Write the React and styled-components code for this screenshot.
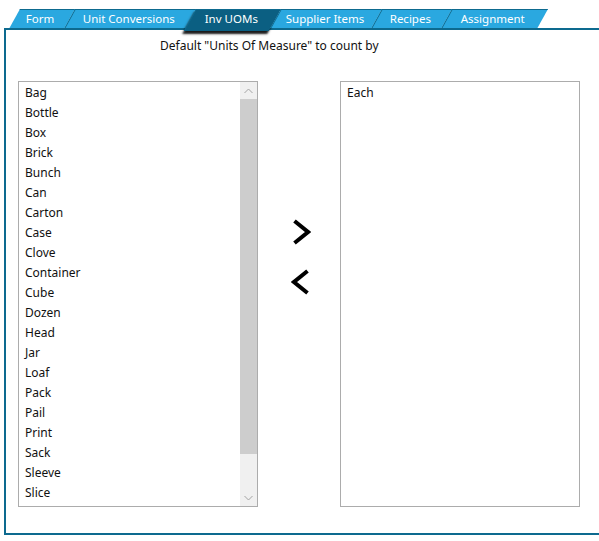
import React from 'react';
import styled, { createGlobalStyle } from 'styled-components';

const Global = createGlobalStyle`
  html, body { margin: 0; padding: 0; background: #fff; overflow: hidden; }
  body { font-family: "Noto Sans", "Open Sans", sans-serif; }
`;

const Page = styled.div`
  padding: 9px 0 0 4px;
  width: 620px;
`;

const TabStrip = styled.div`
  display: flex;
  padding-left: 11px;
  height: 19px;
  position: relative;
  z-index: 1;
`;

const Tab = styled.div`
  box-sizing: border-box;
  width: ${p => p.$w}px;
  height: ${p => (p.$active ? 22 : 19)}px;
  border-top: 1px solid #0d6a8f;
  border-left: ${p => (p.$first ? 'none' : '1px solid #0d6a8f')};
  background: ${p => (p.$active ? '#0b5f82' : '#2aa8e0')};
  box-shadow: ${p => (p.$active ? '0 3px 2px 0 rgba(0,0,0,0.9)' : 'none')};
  transform: skewX(-29deg);
  transform-origin: 0 9px;
  display: flex;
  align-items: flex-start;
  justify-content: center;
  flex-shrink: 0;
`;

const TabLabel = styled.span`
  transform: skewX(29deg);
  color: #fff;
  font-size: 11.5px;
  line-height: 17px;
  padding-right: 4px;
  white-space: nowrap;
`;

const Panel = styled.div`
  box-sizing: border-box;
  width: 600px;
  height: 507px;
  border-top: 2px solid #0d6a8f;
  border-left: 2px solid #0d6a8f;
  border-bottom: 2px solid #0d6a8f;
  padding: 8px 0 0 12px;
`;

const Caption = styled.div`
  margin-left: 142px;
  font-size: 12px;
  line-height: 16px;
  color: #111;
`;

const ListsRow = styled.div`
  display: grid;
  grid-template-columns: 240px 82px 240px;
  margin-top: 27px;
`;

const ListBox = styled.div`
  box-sizing: border-box;
  height: 426px;
  border: 1px solid #acacac;
  display: flex;
  background: #fff;
`;

const Items = styled.div`
  flex: 1;
  padding: 1px 0 0 6px;
  overflow: hidden;
`;

const Item = styled.div`
  font-size: 12px;
  line-height: 20px;
  color: #111;
  white-space: nowrap;
`;

const Scrollbar = styled.div`
  width: 17px;
  background: #f0f0f0;
  display: flex;
  flex-direction: column;
`;

const ScrollArrow = styled.div`
  height: 17px;
  display: flex;
  align-items: center;
  justify-content: center;
`;

const Track = styled.div`
  flex: 1;
`;

const Thumb = styled.div`
  background: #cdcdcd;
`;

const Mover = styled.div`
  display: flex;
  flex-direction: column;
  gap: 22px;
  padding: 137px 0 0 33px;
`;

const Chevron = ({ dir }) => (
  <svg width="20" height="28" viewBox="0 0 20 28">
    <path
      d={dir === 'right' ? 'M3.5 3 L17 14 L3.5 25' : 'M16.5 3 L3 14 L16.5 25'}
      fill="none"
      stroke="#000"
      strokeWidth="4"
      strokeLinejoin="miter"
    />
  </svg>
);

const SmallChevron = ({ up }) => (
  <svg width="9" height="6" viewBox="0 0 9 6">
    <path d={up ? 'M0.5 5 L4.5 1 L8.5 5' : 'M0.5 1 L4.5 5 L8.5 1'} fill="none" stroke="#a3a3a3" strokeWidth="1" />
  </svg>
);

const tabs = [
  { label: 'Form', w: 55 },
  { label: 'Unit Conversions', w: 121 },
  { label: 'Inv UOMs', w: 85, active: true },
  { label: 'Supplier Items', w: 101 },
  { label: 'Recipes', w: 70 },
  { label: 'Assignment', w: 96 },
];

const units = [
  'Bag', 'Bottle', 'Box', 'Brick', 'Bunch', 'Can', 'Carton', 'Case', 'Clove', 'Container',
  'Cube', 'Dozen', 'Head', 'Jar', 'Loaf', 'Pack', 'Pail', 'Print', 'Sack', 'Sleeve', 'Slice',
];

export default function App() {
  return (
    <Page>
      <Global />
      <TabStrip>
        {tabs.map((t, i) => (
          <Tab key={t.label} $w={t.w} $active={t.active} $first={i === 0}>
            <TabLabel>{t.label}</TabLabel>
          </Tab>
        ))}
      </TabStrip>
      <Panel>
        <Caption>Default "Units Of Measure" to count by</Caption>
        <ListsRow>
          <ListBox>
            <Items>
              {units.map(u => (
                <Item key={u}>{u}</Item>
              ))}
            </Items>
            <Scrollbar>
              <ScrollArrow><SmallChevron up /></ScrollArrow>
              <Track>
                <Thumb style={{ height: 355 }} />
              </Track>
              <ScrollArrow><SmallChevron /></ScrollArrow>
            </Scrollbar>
          </ListBox>
          <Mover>
            <Chevron dir="right" />
            <Chevron dir="left" />
          </Mover>
          <ListBox>
            <Items>
              <Item>Each</Item>
            </Items>
          </ListBox>
        </ListsRow>
      </Panel>
    </Page>
  );
}
